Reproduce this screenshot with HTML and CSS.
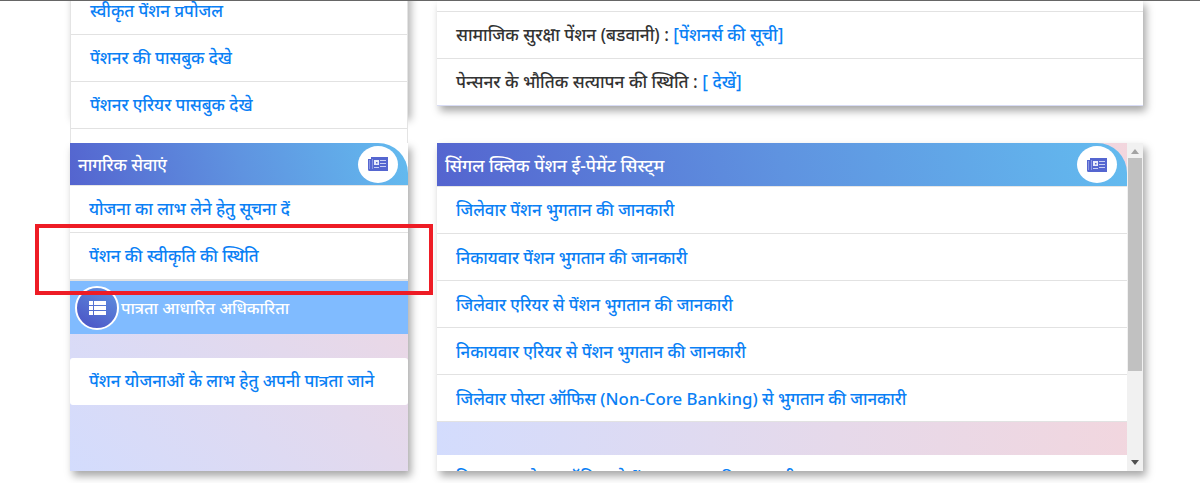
FILE: index.html
```html
<!DOCTYPE html>
<html lang="hi">
<head>
    <meta charset="UTF-8">
    <title>पेंशन सेवाएं</title>
    <link rel="stylesheet" href="styles.css">
</head>
<body>
    <div class="page">
        <div class="col-left">
            <div class="top-card">
                <ul class="list list-left-top">
                    <li><a href="#">स्वीकृत पेंशन प्रपोजल</a></li>
                    <li><a href="#">पेंशनर की पासबुक देखे</a></li>
                    <li><a href="#">पेंशनर एरियर पासबुक देखे</a></li>
                </ul>
            </div>
            <div class="panel panel-left">
                <div class="panel-head">
                    <span>नागरिक सेवाएं</span>
                    <span class="head-icon">
                        <svg width="20" height="14" viewBox="0 0 20 14"><path fill="#5566d0" d="M3 0h17v14H1.5A1.5 1.5 0 0 1 0 12.500V2h3z"/><path fill="#8c98e2" d="M1 3h1v9H1zM4 2h1v10H4z"/><path fill="#c9cff3" d="M12 3h6v1h-6zM12 6h6v1h-6zM12 9h6v1h-6zM6 10h5v1H6z"/><path fill="#e9ebfb" d="M6 3h5v5H6z"/><path fill="#5566d0" d="M8 5h1.500v1.500H8z"/></svg>
                    </span>
                </div>
                <ul class="list">
                    <li><a href="#">योजना का लाभ लेने हेतु सूचना दें</a></li>
                    <li><a href="#">पेंशन की स्वीकृति की स्थिति</a></li>
                </ul>
                <div class="sub-head">
                    <span class="sub-icon">
                        <svg width="17" height="14" viewBox="0 0 17 14"><path fill="#fff" d="M0 0h4v4H0zM5 0h12v4H5zM0 5h4v4H0zM5 5h12v4H5zM0 10h4v4H0zM5 10h12v4H5z"/></svg>
                    </span>
                    <span>पात्रता आधारित अधिकारिता</span>
                </div>
                <ul class="list list-gap">
                    <li><a href="#">पेंशन योजनाओं के लाभ हेतु अपनी पात्रता जाने</a></li>
                </ul>
            </div>
        </div>

        <div class="col-right">
            <div class="top-card-right">
                <ul class="list">
                    <li class="row-cut"></li>
                    <li>सामाजिक सुरक्षा पेंशन (बडवानी) : <a href="#">[पेंशनर्स की सूची]</a></li>
                    <li>पेन्सनर के भौतिक सत्यापन की स्थिति : <a href="#">[ देखें]</a></li>
                </ul>
            </div>
            <div class="panel panel-right">
                <div class="panel-scroll">
                    <div class="panel-head panel-head-tall">
                        <span class="head-wide">सिंगल क्लिक पेंशन ई-पेमेंट सिस्ट्म</span>
                        <span class="head-icon">
                            <svg width="20" height="14" viewBox="0 0 20 14"><path fill="#5566d0" d="M3 0h17v14H1.5A1.5 1.5 0 0 1 0 12.500V2h3z"/><path fill="#8c98e2" d="M1 3h1v9H1zM4 2h1v10H4z"/><path fill="#c9cff3" d="M12 3h6v1h-6zM12 6h6v1h-6zM12 9h6v1h-6zM6 10h5v1H6z"/><path fill="#e9ebfb" d="M6 3h5v5H6z"/><path fill="#5566d0" d="M8 5h1.500v1.500H8z"/></svg>
                        </span>
                    </div>
                    <ul class="list list-pay">
                        <li><a href="#">जिलेवार पेंशन भुगतान की जानकारी</a></li>
                        <li><a href="#">निकायवार पेंशन भुगतान की जानकारी</a></li>
                        <li><a href="#">जिलेवार एरियर से पेंशन भुगतान की जानकारी</a></li>
                        <li><a href="#">निकायवार एरियर से पेंशन भुगतान की जानकारी</a></li>
                        <li><a href="#">जिलेवार पोस्टा ऑफिस (Non-Core Banking) से भुगतान की जानकारी</a></li>
                    </ul>
                    <ul class="list list-gap-small">
                        <li class="row-clipped"><a href="#">निकायवार पोस्टा ऑफिस से पेंशन भुगतान की जानकारी</a></li>
                    </ul>
                </div>
                <div class="scrollbar">
                    <span class="arrow-up"></span>
                    <span class="thumb"></span>
                    <span class="arrow-down"></span>
                </div>
            </div>
        </div>
    </div>
    <div class="highlight"></div>
</body>
</html>
```

FILE: styles.css
```css
html, body {
    margin: 0;
    height: 483px;
    overflow: hidden;
    background: #fff;
}
body {
    font-family: "Noto Sans", "Noto Sans Devanagari", "Lohit Devanagari", "DejaVu Sans", sans-serif;
    font-size: 16.9px;
    font-weight: 500;
    color: #333;
}
body::before {
    content: "";
    position: absolute;
    top: 0;
    left: 0;
    right: 0;
    height: 1px;
    background: #666;
    z-index: 3;
}
a {
    color: #0a80f5;
    text-decoration: none;
}
.page {
    display: flex;
    gap: 29px;
    padding-left: 70px;
}
.col-left {
    width: 338px;
    margin-top: -12px;
}
.col-right {
    width: 706px;
}
.top-card {
    height: 128px;
    box-shadow: 3px 4px 8px rgba(0, 0, 0, .3);
    margin-bottom: 27px;
}
.list-left-top {
    position: relative;
    height: 155px;
    background: #fff;
    border-left: 1px solid #e4e4e4;
    border-right: 1px solid #e4e4e4;
}
.top-card-right {
    margin-bottom: 37px;
    font-size: 17.2px;
    box-shadow: 3px 5px 8px rgba(0, 0, 0, .35);
}
.top-card-right li:last-child {
    border-bottom-color: #d8dcf5;
}
.list {
    margin: 0;
    padding: 0;
    list-style: none;
}
.list li {
    height: 46px;
    line-height: 46px;
    padding-left: 19px;
    background: #fff;
    border-bottom: 1px solid #e2e2e2;
    white-space: nowrap;
    overflow: hidden;
}
.list li.row-cut {
    height: 11px;
}
.list-pay {
    font-size: 16.8px;
}
.list-pay li:not(:first-child) {
    line-height: 48px;
}
.panel {
    box-shadow: 3px 5px 8px rgba(0, 0, 0, .35);
}
.panel-left {
    height: 328px;
    background: linear-gradient(#fff, #fff) top / 100% 42px no-repeat,
        linear-gradient(45deg, #d3dcfd 0%, #f3d6dd 100%);
}
.panel-right {
    height: 328px;
    display: flex;
    background: linear-gradient(85deg, #d3dcfd 0%, #e6d9ea 55%, #f3d6dd 100%);
}
.panel-scroll {
    flex: 1;
    min-width: 0;
    overflow: hidden;
}
.panel-head {
    height: 42px;
    display: flex;
    align-items: center;
    justify-content: space-between;
    padding: 0 10px 0 8px;
    color: #fff;
    background: linear-gradient(75deg, #5464cf 0%, #5f93e0 50%, #63bbef 100%);
    border-top-right-radius: 30px;
    border-bottom: 1px solid #e6e6e6;
}
.panel-head-tall {
    height: 43px;
}
.head-wide {
    font-size: 17.6px;
}
.head-icon {
    width: 40px;
    height: 37px;
    border-radius: 50%;
    background: #fff;
    display: flex;
    align-items: center;
    justify-content: center;
}
.sub-head {
    height: 53px;
    display: flex;
    align-items: center;
    gap: 2px;
    padding-left: 5px;
    font-size: 16.3px;
    color: #fff;
    background: #80bbff;
    border-top: 1px solid #e2e2e2;
}
.sub-icon {
    width: 40px;
    height: 40px;
    border: 2px solid #fff;
    border-radius: 50%;
    background: linear-gradient(30deg, #4a50c4 0%, #5f93e0 100%);
    display: flex;
    align-items: center;
    justify-content: center;
}
.list-gap {
    margin-top: 24px;
}
.list-gap li {
    border-radius: 3px;
    border-bottom: 0;
    height: 47px;
}
.list-gap-small {
    margin-top: 33px;
}
.list li.row-clipped {
    height: 16px;
    line-height: 46px;
    border-bottom: 0;
}
.scrollbar {
    width: 16px;
    background: #f1f1f1;
    display: flex;
    flex-direction: column;
    align-items: center;
}
.arrow-up {
    margin: 6px 0 4px;
    border-left: 4px solid transparent;
    border-right: 4px solid transparent;
    border-bottom: 5px solid #a3a3a3;
}
.thumb {
    width: 14px;
    height: 213px;
    background: #c1c1c1;
}
.arrow-down {
    margin-top: auto;
    margin-bottom: 6px;
    border-left: 4px solid transparent;
    border-right: 4px solid transparent;
    border-top: 5px solid #505050;
}
.highlight {
    position: absolute;
    left: 35px;
    top: 224px;
    width: 390px;
    height: 63px;
    border: 4px solid #ee1c25;
    z-index: 2;
}
```
